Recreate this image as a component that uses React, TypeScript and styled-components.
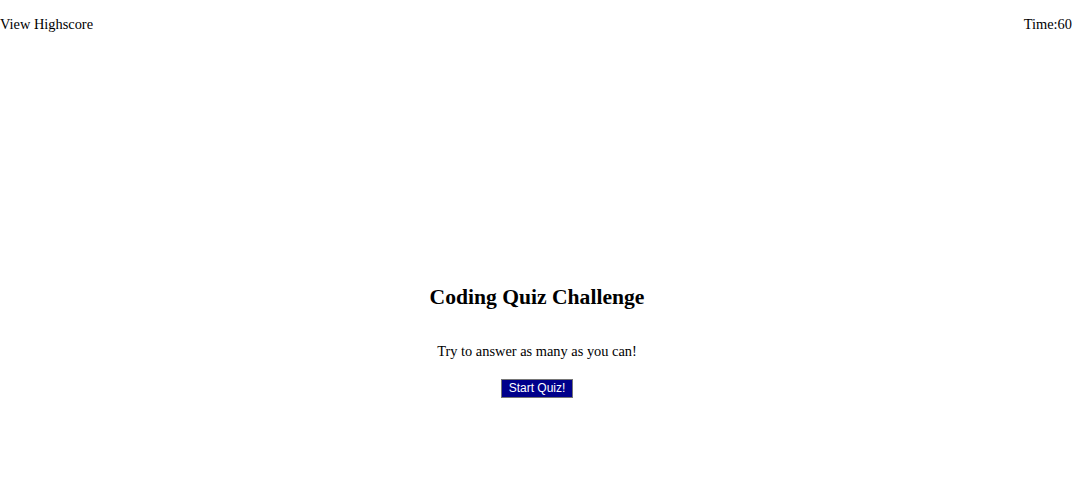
import React from "react";
import styled, { createGlobalStyle } from "styled-components";

const GlobalStyle = createGlobalStyle`
  html, body { margin: 0; padding: 0; background: #fff; }
  body { font-family: "Liberation Serif", "Times New Roman", serif; color: #000; }
`;

const Header = styled.header`
  display: flex;
  justify-content: space-between;
  align-items: baseline;
  padding-right: 6px;
`;

const HeaderText = styled.p`
  margin: 16px 0 15px;
  font-size: 14.4px;
  line-height: 17px;
`;

const Main = styled.main`
  display: flex;
  flex-direction: column;
  align-items: center;
  padding-top: 237px;
  padding-right: 4px;
`;

const Title = styled.h2`
  margin: 0;
  font-size: 21.6px;
  line-height: 25px;
  font-weight: bold;
`;

const Intro = styled.p`
  margin: 33px 0 19px;
  font-size: 14.4px;
  line-height: 17px;
`;

const StartButton = styled.button`
  font-family: "Liberation Sans", Arial, sans-serif;
  font-size: 12px;
  line-height: 15px;
  color: #fff;
  background: #00008b;
  border: 1px solid #767676;
  padding: 1px 7px;
  cursor: pointer;
`;

export default function App() {
  return (
    <>
      <GlobalStyle />
      <Header>
        <HeaderText>View Highscore</HeaderText>
        <HeaderText>Time:60</HeaderText>
      </Header>
      <Main>
        <Title>Coding Quiz Challenge</Title>
        <Intro>Try to answer as many as you can!</Intro>
        <StartButton>Start Quiz!</StartButton>
      </Main>
    </>
  );
}
